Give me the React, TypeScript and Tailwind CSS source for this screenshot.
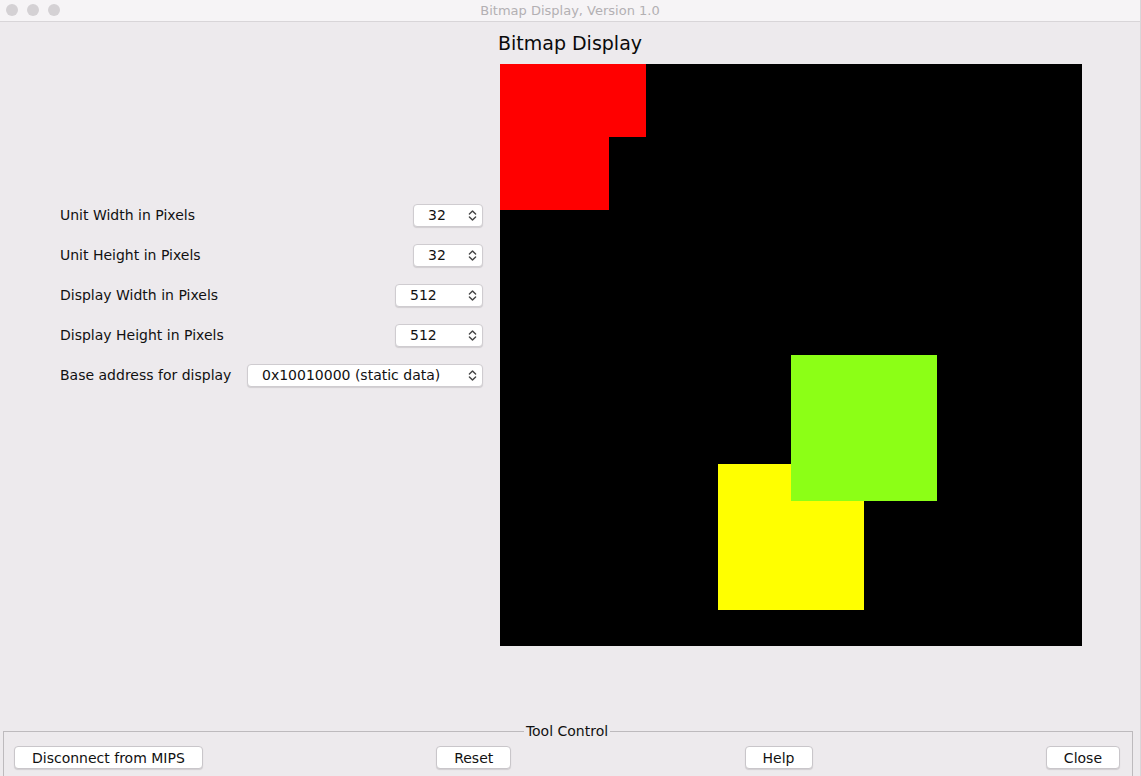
import React from "react";

// 16x16 units, 32px each on a 512px display
const bitmap = [
  "RRRR............",
  "RRRR............",
  "RRR.............",
  "RRR.............",
  "................",
  "................",
  "................",
  "................",
  "........GGGG....",
  "........GGGG....",
  "........GGGG....",
  "......YYGGGG....",
  "......YYYY......",
  "......YYYY......",
  "......YYYY......",
  "................",
];

const cellColor: Record<string, string> = {
  R: "bg-[#ff0000]",
  G: "bg-[#8cff16]",
  Y: "bg-[#ffff00]",
  ".": "bg-black",
};

const settings = [
  { label: "Unit Width in Pixels", value: "32", width: "w-[70px]" },
  { label: "Unit Height in Pixels", value: "32", width: "w-[70px]" },
  { label: "Display Width in Pixels", value: "512", width: "w-[88px]" },
  { label: "Display Height in Pixels", value: "512", width: "w-[88px]" },
  { label: "Base address for display", value: "0x10010000 (static data)", width: "w-[236px]" },
];

function UpDown() {
  return (
    <svg width="9" height="13" viewBox="0 0 9 13" fill="none" stroke="#444" strokeWidth="1.4" strokeLinecap="round" strokeLinejoin="round">
      <path d="M1.4 5 L4.5 1.9 L7.6 5" />
      <path d="M1.4 8 L4.5 11.1 L7.6 8" />
    </svg>
  );
}

function Spinner({ value, width }: { value: string; width: string }) {
  return (
    <div className={`${width} h-[23px] flex items-center justify-between pl-[14px] pr-[5px] bg-white rounded-[4px] border border-[#cfccd0] shadow-[0_1px_1px_rgba(0,0,0,0.12)] text-[14px] text-[#111]`}>
      <span>{value}</span>
      <UpDown />
    </div>
  );
}

function Button({ children }: { children: React.ReactNode }) {
  return (
    <button className="h-[23px] px-[17px] bg-white rounded-[4px] border border-[#c9c6ca] shadow-[0_1px_1px_rgba(0,0,0,0.12)] text-[14px] text-[#111] leading-none">
      {children}
    </button>
  );
}

export default function App() {
  return (
    <div className="w-[1141px] h-[776px] overflow-hidden flex flex-col bg-[#edeaed] border-r border-[#d9d6d9] font-['DejaVu_Sans',sans-serif]">
      <div className="h-[22px] shrink-0 relative flex items-center justify-center bg-[#f6f4f6] border-b border-[#d8d5d8]">
        <div className="absolute left-[6px] top-[4px] flex gap-[9px]">
          <span className="w-[12px] h-[12px] rounded-full bg-[#d4d1d4]" />
          <span className="w-[12px] h-[12px] rounded-full bg-[#d4d1d4]" />
          <span className="w-[12px] h-[12px] rounded-full bg-[#d4d1d4]" />
        </div>
        <span className="text-[13px] text-[#b3b0b3]">Bitmap Display, Version 1.0</span>
      </div>

      <div className="h-[42px] shrink-0 flex items-center justify-center text-[19px] text-[#0a0a0a]">
        Bitmap Display
      </div>

      <div className="h-[659px] shrink-0 flex">
        <div className="w-[500px] pl-[60px] pr-[17px] pt-[140px] flex flex-col gap-[17px]">
          {settings.map((s) => (
            <div key={s.label} className="h-[23px] flex items-center justify-between">
              <span className="text-[14px] text-[#111]">{s.label}</span>
              <Spinner value={s.value} width={s.width} />
            </div>
          ))}
        </div>
        <div className="w-[582px] h-[582px] grid grid-cols-16 grid-rows-16">
          {bitmap.flatMap((row, r) =>
            row.split("").map((c, i) => <div key={`${r}-${i}`} className={cellColor[c]} />)
          )}
        </div>
      </div>

      <fieldset className="shrink-0 h-[62px] ml-[3px] mr-[7px] border border-[#bdbabd] pl-[10px] pr-[12px] pt-[7px]">
        <legend className="mx-auto px-[2px] text-[14px] leading-[16px] text-[#111]">Tool Control</legend>
        <div className="flex justify-between">
          <Button>Disconnect from MIPS</Button>
          <Button>Reset</Button>
          <Button>Help</Button>
          <Button>Close</Button>
        </div>
      </fieldset>
    </div>
  );
}
